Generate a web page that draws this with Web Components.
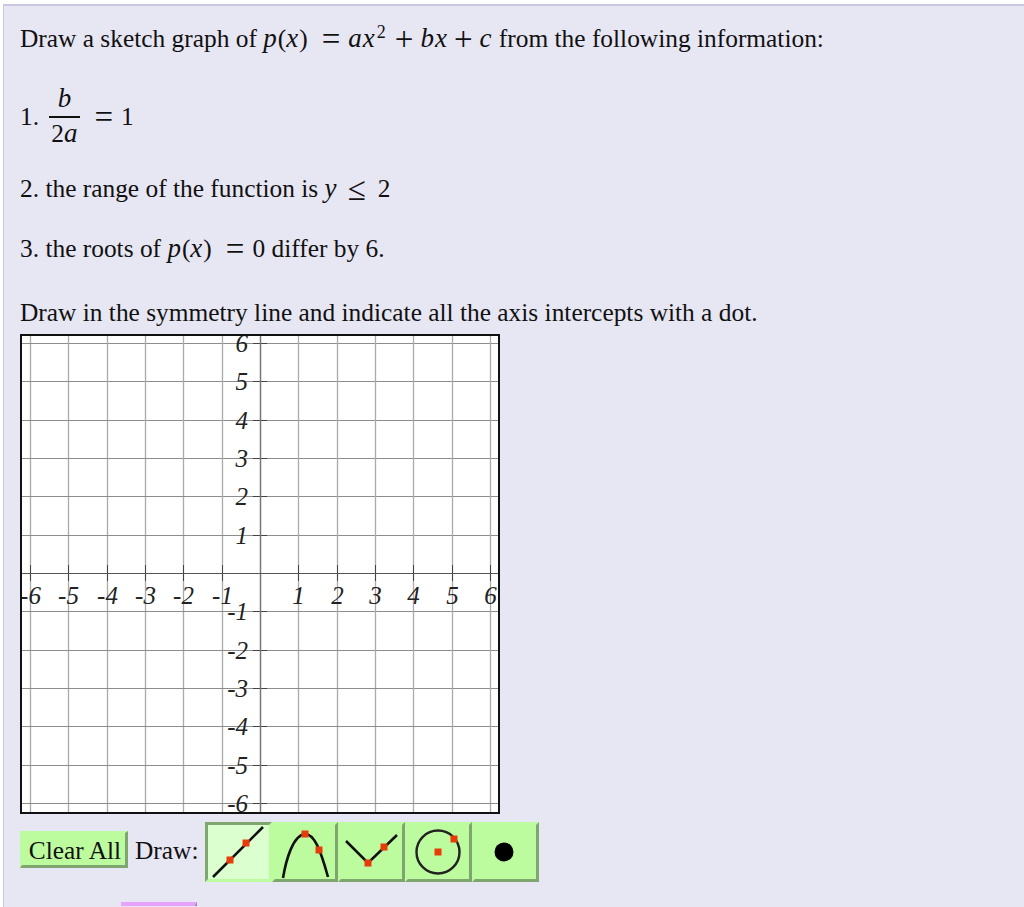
<!DOCTYPE html>
<html>
<head>
<meta charset="utf-8">
<style>
  html, body { margin: 0; height: 907px; overflow: hidden; background: #fff; }
  body { padding: 4px 0 0 3px; box-sizing: border-box; font-family: "Liberation Serif", serif; }
</style>
</head>
<body>
<quiz-panel>
  <text-line height="64">Draw a sketch graph of <m-i>p</m-i>(<m-i>x</m-i>)<m-o rel>=</m-o><m-i>ax</m-i><sup>2</sup><m-o>+</m-o><m-i>bx</m-i><m-o>+</m-o><m-i>c</m-i> from the following information:</text-line>
  <text-line height="86">1. <m-frac><m-i slot="top">b</m-i><span slot="bottom">2<m-i>a</m-i></span></m-frac><m-o rel>=</m-o>1</text-line>
  <text-line height="60">2. the range of the function is <m-i>y</m-i><m-o rel style="margin:0 12px 0 10px">≤</m-o>2</text-line>
  <text-line height="64">3. the roots of <m-i>p</m-i>(<m-i>x</m-i>)<m-o rel>=</m-o>0 differ by 6.</text-line>
  <text-line height="38">Draw in the symmetry line and indicate all the axis intercepts with a dot.</text-line>
  <graph-board></graph-board>
  <draw-toolbar>
    <tool-button selected>
      <svg viewBox="208 825 61 54" width="61" height="54"><path d="M213 877 L263 827" stroke="#111" stroke-width="2.6" fill="none"/><rect x="226.500" y="856.500" width="7" height="7" fill="#e63c0c"/><rect x="242.500" y="839.500" width="7" height="7" fill="#e63c0c"/></svg>
    </tool-button>
    <tool-button>
      <svg viewBox="275 825 60 54" width="60" height="54"><path d="M283 878 C286 860 293 835 305 834 C314 834 320 848 328 877" stroke="#111" stroke-width="2.6" fill="none"/><rect x="301.500" y="830.500" width="7" height="7" fill="#e63c0c"/><rect x="315.500" y="846.500" width="7" height="7" fill="#e63c0c"/></svg>
    </tool-button>
    <tool-button>
      <svg viewBox="341 825 61 54" width="61" height="54"><path d="M346 841 L368 863 L397 835" stroke="#111" stroke-width="2.6" fill="none"/><rect x="364.500" y="859.500" width="7" height="7" fill="#e63c0c"/><rect x="380.500" y="843.500" width="7" height="7" fill="#e63c0c"/></svg>
    </tool-button>
    <tool-button>
      <svg viewBox="408 825 61 54" width="61" height="54"><circle cx="438" cy="852" r="21.5" stroke="#222" stroke-width="2.4" fill="none"/><rect x="434.500" y="848.500" width="7" height="7" fill="#e63c0c"/><rect x="450.500" y="835.500" width="7" height="7" fill="#e63c0c"/></svg>
    </tool-button>
    <tool-button>
      <svg viewBox="475 825 61 54" width="61" height="54"><circle cx="504" cy="852" r="9.5" fill="#000"/></svg>
    </tool-button>
  </draw-toolbar>
  <pink-tab></pink-tab>
</quiz-panel>

<script>
class QuizPanel extends HTMLElement {
  constructor () {
    super()
    this.attachShadow({ mode: 'open' }).innerHTML = `
      <style>
        :host{
          display: block;
          width: 1021px;
          height: 903px;
          box-sizing: border-box;
          overflow: hidden;
          background: #e7e6f3;
          border-top: 2px solid #c9c8e0;
          border-left: 1px solid #c9c8e0;
          padding: 16px 0 0 16px;
          color: #111;
          font: 25.4px/32px "Liberation Serif", serif;
        }
      </style>
      <slot></slot>
    `
  }
}

class TextLine extends HTMLElement {
  constructor () {
    super()
    this.attachShadow({ mode: 'open' }).innerHTML = `<style>
        :host{
          display: block;
          white-space: nowrap;
        }
        ::slotted(sup){
          font-size: 18px;
          line-height: 0;
          margin: 0 3px 0 1px;
        }
      </style><slot></slot>`
  }

  connectedCallback () {
    this.style.height = this.getAttribute('height') + 'px'
  }
}

class MathIdent extends HTMLElement {
  constructor () {
    super()
    this.attachShadow({ mode: 'open' }).innerHTML = `<style>
        :host{ display: inline; font-style: italic; font-size: 27px; letter-spacing: 1px; }
      </style><slot></slot>`
  }
}

class MathOp extends HTMLElement {
  constructor () {
    super()
    this.attachShadow({ mode: 'open' }).innerHTML = `<style>
        :host{ display: inline; margin: 0 7px 0 6px; font-size: 33px; line-height: 0; position: relative; top: 3px; }
        :host([rel]){ margin: 0 8px 0 14px; }
      </style><slot></slot>`
  }
}

class MathFrac extends HTMLElement {
  constructor () {
    super()
    this.attachShadow({ mode: 'open' }).innerHTML = `<style>
        :host{
          display: inline-block;
          vertical-align: -17.5px;
          width: 31px;
          margin: 0 0 0 4px;
          text-align: center;
          line-height: 30px;
        }
        .top{ border-bottom: 2px solid #111; height: 30px; line-height: 25px; }
      </style><div class="top"><slot name="top"></slot></div><div><slot name="bottom"></slot></div>`
  }
}

class GraphBoard extends HTMLElement {
  constructor () {
    super()
    this.attachShadow({ mode: 'open' })
  }

  connectedCallback () {
    this.render()
  }

  render () {
    const step = 38.33
    const x0 = 238 // axis inside the svg
    const y0 = 237
    let lines = ''
    let labels = ''
    for (let i = -6; i <= 6; i++) {
      const x = Math.round(x0 + i * step) + 0.5
      const y = Math.round(y0 + i * step) + 0.5
      if (i !== 0) {
        lines += `<path d="M${x} 0V476" stroke="#aaa" stroke-width="1.3"/>`
        lines += `<path d="M0 ${y}H476" stroke="#8d8d8d"/>`
        lines += `<path d="M${x} ${y0 - 8}V${y0 + 8}" stroke="#444"/>`
        lines += `<path d="M${x0 - 7} ${y}H${x0 + 7}" stroke="#444"/>`
        labels += `<text x="${x}" y="${y0 + 31}" text-anchor="middle">${i}</text>`
        labels += `<text x="${x0 - 12}" y="${Math.round(y0 - i * step) + 9}" text-anchor="end">${i}</text>`
      }
    }
    this.shadowRoot.innerHTML = `
      <style>
        :host{
          display: block;
          width: 476px;
          height: 476px;
          border: 2px solid #111;
          background: #fff;
        }
        svg{ display: block; }
        text{ font: italic 25px "Liberation Serif", serif; fill: #222; }
      </style>
      <svg viewBox="0 0 476 476" width="476" height="476">
        ${lines}
        <path d="M${x0 + 0.5} 0V476" stroke="#777" stroke-width="1.5"/>
        <path d="M0 ${y0 + 0.5}H476" stroke="#555"/>
        ${labels}
      </svg>
    `
  }
}

class DrawToolbar extends HTMLElement {
  constructor () {
    super()
    this.attachShadow({ mode: 'open' }).innerHTML = `
      <style>
        :host{
          display: flex;
          align-items: center;
          margin-top: 8px;
        }
        .clear{
          width: 108px;
          height: 37px;
          margin-bottom: 5px;
          padding-left: 3px;
          box-sizing: border-box;
          background: #bdfb9f;
          border: solid;
          border-width: 2px 3px 3px 2px;
          border-color: #bdfb9f #7ea66e #7ea66e #bdfb9f;
          text-align: center;
          line-height: 34px;
        }
        .label{ margin: 0 7px 5px 7px; line-height: 36px; }
      </style>
      <div class="clear">Clear All</div>
      <div class="label">Draw:</div>
      <slot></slot>
    `
  }
}

class ToolButton extends HTMLElement {
  constructor () {
    super()
    this.attachShadow({ mode: 'open' }).innerHTML = `
      <style>
        :host{
          display: block;
          box-sizing: border-box;
          height: 60px;
          background: #bdfb9f;
          border: 3px solid;
          border-color: #bdfb9f #7ea66e #7ea66e #bdfb9f;
          line-height: 0;
        }
        :host([selected]){
          background: #dcffcf;
          border-color: #7ea66e #bdfb9f #bdfb9f #7ea66e;
        }
      </style>
      <slot></slot>
    `
  }
}

class PinkTab extends HTMLElement {
  constructor () {
    super()
    this.attachShadow({ mode: 'open' }).innerHTML = `
      <style>
        :host{
          display: block;
          box-sizing: border-box;
          width: 76px;
          height: 4px;
          margin: 20px 0 0 101px;
          background: #e6a3fb;
          border-top: 4px solid #e6a3fb;
          border-right: 2px solid #a078b0;
        }
      </style>
    `
  }
}

customElements.define('quiz-panel', QuizPanel)
customElements.define('text-line', TextLine)
customElements.define('m-i', MathIdent)
customElements.define('m-o', MathOp)
customElements.define('m-frac', MathFrac)
customElements.define('graph-board', GraphBoard)
customElements.define('draw-toolbar', DrawToolbar)
customElements.define('tool-button', ToolButton)
customElements.define('pink-tab', PinkTab)
</script>
</body>
</html>
